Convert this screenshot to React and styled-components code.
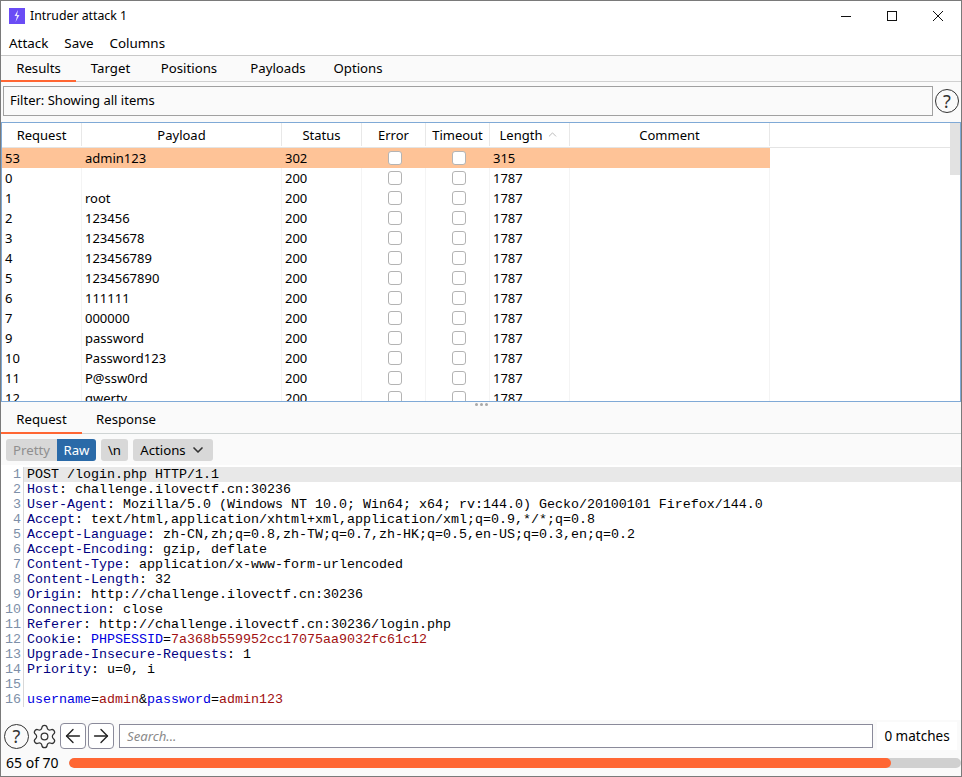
import React from "react";
import styled, { createGlobalStyle } from "styled-components";
import { ArrowLeft, ArrowRight, ChevronDown, ChevronUp, Settings } from "lucide-react";

const GlobalStyle = createGlobalStyle`
  html, body {
    margin: 0;
    padding: 0;
    background: #fff;
    overflow: hidden;
  }
  * { box-sizing: border-box; }
`;

const SANS = `"Noto Sans", "Open Sans", sans-serif`;
const MONO = `"Liberation Mono", monospace`;

const Window = styled.div`
  display: flex;
  flex-direction: column;
  width: 962px;
  height: 777px;
  border: 1px solid #7a7a7a;
  background: #fff;
  color: #000;
  font-family: ${SANS};
  font-size: 13.2px;
  overflow: hidden;
`;

const TitleBar = styled.div`
  display: flex;
  align-items: center;
  height: 29px;
  flex: none;
  padding-left: 8px;
`;

const Logo = styled.svg`
  width: 16px;
  height: 16px;
  margin-right: 5px;
`;

const Title = styled.div`
  flex: 1;
  font-size: 12.3px;
`;

const WinButton = styled.div`
  display: flex;
  align-items: center;
  justify-content: center;
  width: 46px;
  height: 29px;
`;

const MenuBar = styled.div`
  display: flex;
  align-items: center;
  gap: 16px;
  height: 26px;
  flex: none;
  padding-left: 8px;
  font-size: 13.4px;
  border-bottom: 1px solid #c8c8c8;
`;

const TabBar = styled.div`
  display: flex;
  flex: none;
  height: 26px;
  background: #fafafa;
  border-bottom: 1px solid #d0d0d0;
`;

const Tab = styled.div`
  display: flex;
  align-items: center;
  justify-content: center;
  width: ${(p) => p.$width}px;
  height: 26px;
  padding-bottom: 1px;
  border-bottom: 2px solid ${(p) => (p.$active ? "#ff6633" : "transparent")};
`;

const FilterRow = styled.div`
  display: flex;
  align-items: center;
  flex: none;
  height: 40px;
  padding: 2px 2px 5px 2px;
  background: #fafafa;
`;

const FilterBox = styled.div`
  display: flex;
  align-items: center;
  flex: 1;
  height: 30px;
  padding: 0 0 1px 6px;
  font-size: 13px;
  border: 1px solid #a0a0a0;
`;

const Help = styled.div`
  display: flex;
  align-items: center;
  justify-content: center;
  flex: none;
  width: 24px;
  height: 24px;
  margin-left: 2px;
  border: 1.5px solid #333;
  border-radius: 50%;
  font-size: 18px;
  line-height: 1;
  color: #333;
`;

const TableFrame = styled.div`
  position: relative;
  flex: none;
  height: 280px;
  border: 1px solid #7fa9d6;
  overflow: hidden;
  background: #fff;
  font-size: 13px;
`;

const HeaderRow = styled.div`
  display: grid;
  grid-template-columns: 80px 200px 80px 64px 64px 80px 200px;
  height: 25px;
  border-bottom: 1px solid #e4e4e4;
`;

const HeaderCell = styled.div`
  display: flex;
  align-items: center;
  justify-content: center;
  gap: 4px;
  height: 23px;
  border-right: 1px solid #e8e8e8;
`;

const Row = styled.div`
  display: grid;
  grid-template-columns: 80px 200px 80px 64px 64px 80px 200px;
  width: 768px;
  height: 20px;
  background: ${(p) => (p.$hit ? "#fec397" : "#fff")};
`;

const Cell = styled.div`
  display: flex;
  align-items: center;
  justify-content: ${(p) => (p.$center ? "center" : "flex-start")};
  padding-left: ${(p) => (p.$center ? 2 : 3)}px;
  border-right: 1px solid ${(p) => (p.$hit ? "transparent" : "#f4f4f4")};
`;

const Check = styled.div`
  width: 14px;
  height: 14px;
  border: 1px solid #b4b4b4;
  border-radius: 3px;
  background: #fff;
`;

const ScrollThumb = styled.div`
  position: absolute;
  top: 0;
  right: 0;
  width: 10px;
  height: 52px;
  background: #e2e2e2;
`;

const Splitter = styled.div`
  display: flex;
  align-items: center;
  justify-content: center;
  gap: 2px;
  flex: none;
  height: 4px;
  background: #fafafa;
`;

const Dot = styled.span`
  width: 3px;
  height: 3px;
  border-radius: 50%;
  background: #a8a8a8;
`;

const LowerTabs = styled(TabBar)`
  height: 28px;
  border-bottom-color: #cfd4d4;
`;

const LowerTab = styled(Tab)`
  height: 28px;
  padding-bottom: 0;
`;

const ViewBar = styled.div`
  display: flex;
  align-items: center;
  flex: none;
  height: 31px;
  padding-left: 5px;
  gap: 5px;
  background: #fafafa;
`;

const Segment = styled.div`
  display: flex;
  height: 22px;
  border-radius: 3px;
  overflow: hidden;
`;

const SegmentItem = styled.div`
  display: flex;
  align-items: center;
  justify-content: center;
  width: ${(p) => p.$width}px;
  background: ${(p) => (p.$active ? "#2a6aa8" : "#d8d8d8")};
  color: ${(p) => (p.$active ? "#fff" : "#8f8f8f")};
`;

const GreyButton = styled.div`
  display: flex;
  align-items: center;
  justify-content: center;
  gap: 4px;
  width: ${(p) => p.$width}px;
  height: 22px;
  border-radius: 3px;
  background: #d8d8d8;
`;

const Editor = styled.div`
  flex: 1;
  display: flex;
  flex-direction: column;
  padding-top: 2px;
  background: #fff;
  font-family: ${MONO};
  font-size: 13.33px;
  overflow: hidden;
`;

const Line = styled.div`
  display: flex;
  height: 15px;
  line-height: 15px;
  flex: none;
  white-space: pre;
  background: ${(p) => (p.$current ? "#e8e8e8" : "transparent")};
`;

const LineNo = styled.div`
  flex: none;
  width: 23px;
  margin-right: 3px;
  padding-right: 2px;
  text-align: right;
  color: #7d8fa8;
  background: #fff;
  border-right: 1px solid #d8d8d8;
`;

const Key = styled.span`
  color: #000080;
`;

const Param = styled.span`
  color: #0000e0;
`;

const Val = styled.span`
  color: #a01010;
`;

const SearchBar = styled.div`
  display: flex;
  align-items: center;
  flex: none;
  height: 31px;
  padding: 1px 0 0 3px;
  background: #fafafa;
`;

const SearchHelp = styled(Help)`
  width: 25px;
  height: 25px;
  margin: 0;
`;

const GearWrap = styled.div`
  display: flex;
  margin: 0 2px;
`;

const ArrowButton = styled.div`
  display: flex;
  align-items: center;
  justify-content: center;
  width: 26px;
  height: 26px;
  margin-right: 2px;
  border: 1px solid #8a8a9a;
  border-radius: 4px;
  background: #fff;
`;

const SearchInput = styled.div`
  display: flex;
  align-items: center;
  flex: 1;
  height: 24px;
  margin-left: 3px;
  padding-left: 7px;
  border: 1px solid #8a8a9a;
  background: #fff;
  color: #8a8a8a;
  font-style: italic;
`;

const Matches = styled.div`
  display: flex;
  align-items: center;
  justify-content: center;
  flex: none;
  width: 80px;
  height: 28px;
  margin: 0 4px;
  font-size: 13.5px;
  background: #fff;
`;

const ProgressRow = styled.div`
  display: flex;
  align-items: center;
  flex: none;
  height: 25px;
  padding: 0 0 2px 5px;
  background: #fafafa;
`;

const ProgressLabel = styled.div`
  flex: none;
  width: 63px;
  font-size: 14px;
`;

const Track = styled.div`
  flex: 1;
  height: 10px;
  border-radius: 5px;
  background: #d0d0d0;
  overflow: hidden;
`;

const Fill = styled.div`
  height: 100%;
  border-radius: 5px;
  background: #ff6633;
`;

const rows = [
  ["53", "admin123", "302", "315"],
  ["0", "", "200", "1787"],
  ["1", "root", "200", "1787"],
  ["2", "123456", "200", "1787"],
  ["3", "12345678", "200", "1787"],
  ["4", "123456789", "200", "1787"],
  ["5", "1234567890", "200", "1787"],
  ["6", "111111", "200", "1787"],
  ["7", "000000", "200", "1787"],
  ["9", "password", "200", "1787"],
  ["10", "Password123", "200", "1787"],
  ["11", "P@ssw0rd", "200", "1787"],
  ["12", "qwerty", "200", "1787"],
];

const header = (name, value) => (
  <>
    <Key>{name}</Key>: {value}
  </>
);

const lines = [
  "POST /login.php HTTP/1.1",
  header("Host", "challenge.ilovectf.cn:30236"),
  header("User-Agent", "Mozilla/5.0 (Windows NT 10.0; Win64; x64; rv:144.0) Gecko/20100101 Firefox/144.0"),
  header("Accept", "text/html,application/xhtml+xml,application/xml;q=0.9,*/*;q=0.8"),
  header("Accept-Language", "zh-CN,zh;q=0.8,zh-TW;q=0.7,zh-HK;q=0.5,en-US;q=0.3,en;q=0.2"),
  header("Accept-Encoding", "gzip, deflate"),
  header("Content-Type", "application/x-www-form-urlencoded"),
  header("Content-Length", "32"),
  header("Origin", "http://challenge.ilovectf.cn:30236"),
  header("Connection", "close"),
  header("Referer", "http://challenge.ilovectf.cn:30236/login.php"),
  <>
    <Key>Cookie</Key>: <Param>PHPSESSID</Param>=<Val>7a368b559952cc17075aa9032fc61c12</Val>
  </>,
  header("Upgrade-Insecure-Requests", "1"),
  header("Priority", "u=0, i"),
  "",
  <>
    <Param>username</Param>=<Val>admin</Val>&amp;<Param>password</Param>=<Val>admin123</Val>
  </>,
];

const mainTabs = [
  ["Results", 75],
  ["Target", 69],
  ["Positions", 88],
  ["Payloads", 90],
  ["Options", 70],
];

const columns = ["Request", "Payload", "Status", "Error", "Timeout", "Length", "Comment"];

const App = () => (
  <>
    <GlobalStyle />
    <Window>
      <TitleBar>
        <Logo viewBox="0 0 16 16">
          <rect width="16" height="16" fill="#6a4cf5" />
          <path d="M9 2 L5.5 8 L8 8 L6.5 14 L10.5 7 L8 7 Z" fill="#e8e4ff" />
        </Logo>
        <Title>Intruder attack 1</Title>
        <WinButton>
          <svg width="12" height="12" viewBox="0 0 12 12">
            <path d="M1 6.5H11" stroke="#111" fill="none" />
          </svg>
        </WinButton>
        <WinButton>
          <svg width="12" height="12" viewBox="0 0 12 12">
            <rect x="1.5" y="1.5" width="9" height="9" stroke="#111" fill="none" />
          </svg>
        </WinButton>
        <WinButton>
          <svg width="12" height="12" viewBox="0 0 12 12">
            <path d="M1 1L11 11M11 1L1 11" stroke="#111" fill="none" />
          </svg>
        </WinButton>
      </TitleBar>
      <MenuBar>
        <span>Attack</span>
        <span>Save</span>
        <span>Columns</span>
      </MenuBar>
      <TabBar>
        {mainTabs.map(([name, width], i) => (
          <Tab key={name} $width={width} $active={i === 0}>
            {name}
          </Tab>
        ))}
      </TabBar>
      <FilterRow>
        <FilterBox>Filter: Showing all items</FilterBox>
        <Help>?</Help>
      </FilterRow>
      <TableFrame>
        <HeaderRow>
          {columns.map((name) => (
            <HeaderCell key={name}>
              {name}
              {name === "Length" && <ChevronUp size={13} color="#aaa" strokeWidth={1.5} />}
            </HeaderCell>
          ))}
        </HeaderRow>
        {rows.map(([id, payload, status, length], i) => (
          <Row key={id} $hit={i === 0}>
            <Cell $hit={i === 0}>{id}</Cell>
            <Cell $hit={i === 0}>{payload}</Cell>
            <Cell $hit={i === 0}>{status}</Cell>
            <Cell $hit={i === 0} $center>
              <Check />
            </Cell>
            <Cell $hit={i === 0} $center>
              <Check />
            </Cell>
            <Cell $hit={i === 0}>{length}</Cell>
            <Cell $hit={i === 0} />
          </Row>
        ))}
        <ScrollThumb />
      </TableFrame>
      <Splitter>
        <Dot />
        <Dot />
        <Dot />
      </Splitter>
      <LowerTabs>
        <LowerTab $width={81} $active>
          Request
        </LowerTab>
        <LowerTab $width={88}>Response</LowerTab>
      </LowerTabs>
      <ViewBar>
        <Segment>
          <SegmentItem $width={51}>Pretty</SegmentItem>
          <SegmentItem $width={39} $active>
            Raw
          </SegmentItem>
        </Segment>
        <GreyButton $width={27}>\n</GreyButton>
        <GreyButton $width={80}>
          Actions
          <ChevronDown size={16} strokeWidth={2.5} color="#333" />
        </GreyButton>
      </ViewBar>
      <Editor>
        {lines.map((content, i) => (
          <Line key={i} $current={i === 0}>
            <LineNo>{i + 1}</LineNo>
            <span>{content}</span>
          </Line>
        ))}
      </Editor>
      <SearchBar>
        <SearchHelp>?</SearchHelp>
        <GearWrap>
          <Settings size={27} strokeWidth={1.1} color="#333" />
        </GearWrap>
        <ArrowButton>
          <ArrowLeft size={22} strokeWidth={1.5} color="#222" />
        </ArrowButton>
        <ArrowButton>
          <ArrowRight size={22} strokeWidth={1.5} color="#222" />
        </ArrowButton>
        <SearchInput>Search...</SearchInput>
        <Matches>0 matches</Matches>
      </SearchBar>
      <ProgressRow>
        <ProgressLabel>65 of 70</ProgressLabel>
        <Track>
          <Fill style={{ width: "92.1%" }} />
        </Track>
      </ProgressRow>
    </Window>
  </>
);

export default App;
